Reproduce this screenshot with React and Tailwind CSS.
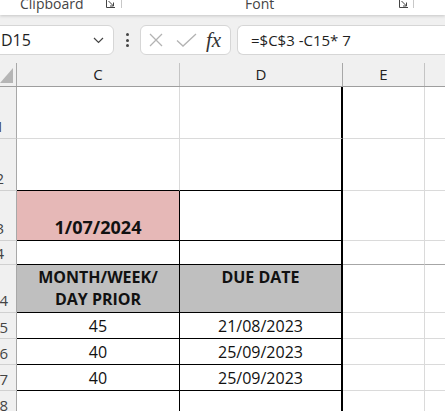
import React from "react";

const rowHdr = "shrink-0 w-[17px] border-r border-r-[#a8a8a8] border-b border-b-[#d0d0d0] bg-[#f0f0f0] overflow-hidden flex items-end justify-end text-[15px] leading-[20px] text-[#444]";

function RowHead({ label, pr, pb = "pb-[2px]" }) {
  return (
    <div className={rowHdr + " " + pr + " " + pb}>
      <span className="shrink-0">{label}</span>
    </div>
  );
}

const light = "border-b border-r border-[#dadada]";

export default function App() {
  return (
    <div className="w-[445px] h-[411px] overflow-hidden bg-white relative" style={{ fontFamily: '"Open Sans", "Noto Sans", sans-serif' }}>
      {/* Ribbon bottom */}
      <div className="h-[15px] bg-white relative z-10 shadow-[0_1px_3px_rgba(0,0,0,0.18)] flex text-[14px] text-[#444] leading-none">
        <div className="w-[122px] shrink-0 relative border-r border-[#c8c8c8] h-[8px]">
          <span className="absolute left-[20px] -top-[3px]">Clipboard</span>
          <LauncherIcon className="absolute left-[106px] -top-[1px]" />
        </div>
        <div className="w-[292px] shrink-0 relative border-r border-[#c8c8c8] h-[8px]">
          <span className="absolute left-[123px] -top-[3px]">Font</span>
          <LauncherIcon className="absolute left-[277px] -top-[1px]" />
        </div>
      </div>

      {/* Formula bar */}
      <div className="h-[48px] bg-[#f0f0f0] flex items-start pt-[10px]">
        <div className="w-[120px] h-[30px] shrink-0 bg-white border border-[#d6d6d6] rounded-[6px] -ml-[6px] flex items-center justify-between pl-[6px] pr-[9px]">
          <span className="text-[16px] text-[#1f1f1f]">D15</span>
          <svg width="11" height="7" viewBox="0 0 11 7" fill="none" stroke="#444" strokeWidth="1.2"><path d="M1 1l4.5 4.5L10 1" /></svg>
        </div>
        <div className="w-[26px] h-[30px] shrink-0 flex flex-col items-center justify-center gap-[2.5px]">
          <span className="w-[3px] h-[3px] bg-[#444] rounded-full" />
          <span className="w-[3px] h-[3px] bg-[#444] rounded-full" />
          <span className="w-[3px] h-[3px] bg-[#444] rounded-full" />
        </div>
        <div className="w-[91px] h-[30px] shrink-0 bg-white border border-[#d6d6d6] rounded-[6px] flex items-center pl-[8px]">
          <svg width="14" height="14" viewBox="0 0 14 14" stroke="#b3b3b3" strokeWidth="1.3" fill="none"><path d="M1 1l12 12M13 1L1 13" /></svg>
          <svg className="ml-[13px]" width="21" height="14" viewBox="0 0 21 14" stroke="#b3b3b3" strokeWidth="1.3" fill="none"><path d="M1 7.5l6 5.5L20 1" /></svg>
          <span className="ml-[9px] text-[21px] text-[#333] italic leading-none" style={{ fontFamily: '"Liberation Serif", "DejaVu Serif", serif' }}>fx</span>
        </div>
        <div className="ml-[6px] flex-1 h-[30px] bg-white border border-[#d6d6d6] rounded-l-[6px] border-r-0 flex items-center pl-[13px] text-[15px] text-[#1f1f1f]">
          =$C$3 -C15* 7
        </div>
      </div>

      {/* Column headers */}
      <div className="flex h-[24px] bg-[#f0f0f0] border-b border-[#9e9e9e] text-[15px] text-[#222]">
        <div className="w-[17px] shrink-0 border-r border-[#a8a8a8] relative">
          <svg className="absolute left-0 top-[5px]" width="13" height="15" viewBox="0 0 13 15"><path d="M13 0V15H0z" fill="#b5b5b5" /></svg>
        </div>
        <div className="w-[163px] shrink-0 border-r border-[#c4c4c4] flex items-center justify-center">C</div>
        <div className="w-[163px] shrink-0 border-r border-[#a8a8a8] flex items-center justify-center">D</div>
        <div className="w-[82px] shrink-0 border-r border-[#c4c4c4] flex items-center justify-center">E</div>
        <div className="flex-1" />
      </div>

      {/* Rows */}
      <div className="text-[#111]">
        {/* Row 1 */}
        <div className="flex h-[52px]">
          <RowHead label="11" pr="pr-[12px]" />
          <div className={"w-[163px] shrink-0 " + light} />
          <div className="w-[163px] shrink-0 border-b border-[#dadada] border-r-2 border-r-black" />
          <div className={"w-[82px] shrink-0 " + light} />
          <div className="flex-1 border-b border-[#dadada]" />
        </div>
        {/* Row 2 */}
        <div className="flex h-[52px]">
          <RowHead label="12" pr="pr-[12px]" />
          <div className="w-[163px] shrink-0 border-b border-b-black border-r border-r-[#dadada]" />
          <div className="w-[163px] shrink-0 border-b border-b-black border-r-2 border-r-black" />
          <div className={"w-[82px] shrink-0 " + light} />
          <div className="flex-1 border-b border-[#dadada]" />
        </div>
        {/* Row 3 */}
        <div className="flex h-[50px]">
          <RowHead label="13" pr="pr-[12px]" />
          <div className="w-[163px] shrink-0 bg-[#e6b8b7] border-b border-r border-black flex items-end justify-center pb-[1px] text-[18px] font-bold leading-[24px]">1/07/2024</div>
          <div className="w-[163px] shrink-0 border-b border-b-black border-r-2 border-r-black" />
          <div className={"w-[82px] shrink-0 " + light} />
          <div className="flex-1 border-b border-[#dadada]" />
        </div>
        {/* Row 4 */}
        <div className="flex h-[24px]">
          <RowHead label="14" pr="pr-[12px]" pb="pb-[1px]" />
          <div className="w-[163px] shrink-0 border-b border-r border-black" />
          <div className="w-[163px] shrink-0 border-b border-b-black border-r-2 border-r-black" />
          <div className="w-[82px] shrink-0 border-b border-b-[#a6a6a6] border-r border-r-[#dadada]" />
          <div className="flex-1 border-b border-b-[#a6a6a6]" />
        </div>
        {/* Row 14 header */}
        <div className="flex h-[48px]">
          <RowHead label="14" pr="pr-[8px]" pb="pb-[2px]" />
          <div className="w-[163px] shrink-0 bg-[#bfbfbf] border-b border-r border-black flex flex-col items-center pt-[1px] text-[16px] font-bold leading-[22px]">
            <span>MONTH/WEEK/</span>
            <span>DAY PRIOR</span>
          </div>
          <div className="w-[163px] shrink-0 bg-[#bfbfbf] border-b border-b-black border-r-2 border-r-black flex justify-center pt-[1px] text-[16px] font-bold leading-[22px]">DUE DATE</div>
          <div className={"w-[82px] shrink-0 " + light} />
          <div className="flex-1 border-b border-[#dadada]" />
        </div>
        {[
          ["15", "45", "21/08/2023"],
          ["16", "40", "25/09/2023"],
          ["17", "40", "25/09/2023"],
          ["18", "", ""],
        ].map(([r, a, b]) => (
          <div key={r} className="flex h-[26px]">
            <RowHead label={r} pr="pr-[8px]" pb="pb-[1px]" />
            <div className="w-[163px] shrink-0 border-b border-r border-black flex items-end justify-center text-[16px] leading-[22px] pb-[1px]">{a}</div>
            <div className="w-[163px] shrink-0 border-b border-b-black border-r-2 border-r-black flex items-end justify-center text-[16px] leading-[22px] pb-[1px]">{b}</div>
            <div className={"w-[82px] shrink-0 " + light} />
            <div className="flex-1 border-b border-[#dadada]" />
          </div>
        ))}
      </div>
    </div>
  );
}

function LauncherIcon({ className }) {
  return (
    <svg className={className} width="10" height="9" viewBox="0 0 10 9" fill="none" stroke="#444" strokeWidth="1">
      <path d="M0.5 0v8.5H9" />
      <path d="M2.5 2l5 5M7.5 3.5V7H4" />
    </svg>
  );
}
